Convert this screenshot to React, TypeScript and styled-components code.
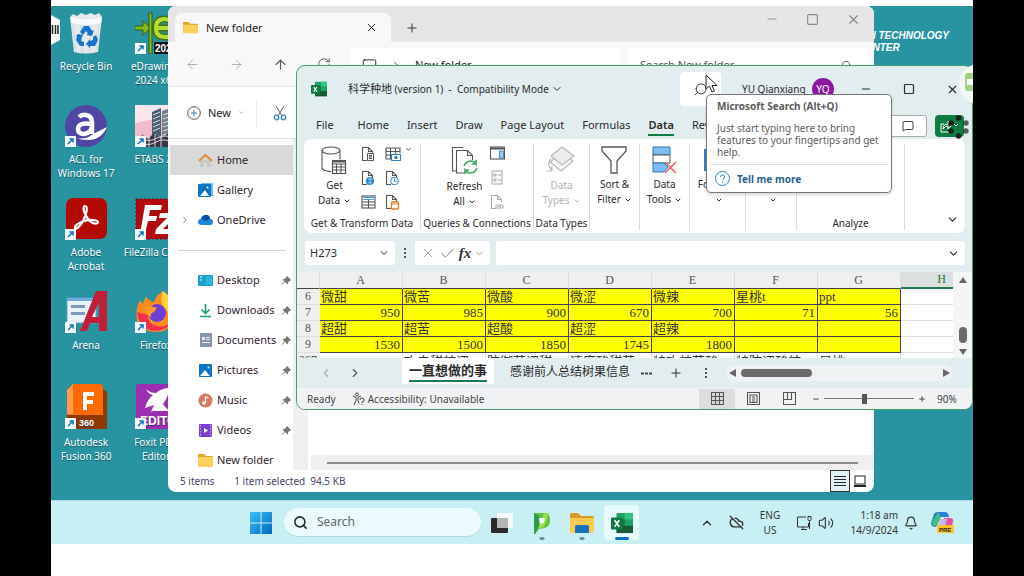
import React from 'react';
import styled, { createGlobalStyle } from 'styled-components';
import { ArrowLeft, ArrowRight, ArrowUp, Bell, ChevronDown, ChevronLeft, ChevronRight, ChevronUp, CloudOff, Minus, Monitor, Plus, RotateCw, Search, Square, Volume2, X, Check, MessageSquare } from 'lucide-react';

const ui = '"Noto Sans", "Noto Sans CJK SC", sans-serif';
const sheetFont = '"Liberation Serif", "Noto Sans CJK SC", serif';

const Global = createGlobalStyle`
  * { box-sizing: border-box; }
  body { margin: 0; background: #000; font-family: ${ui}; font-size: 10px; line-height: 14px; color: #2b2b2b; }
  button { border: 0; background: none; padding: 0; margin: 0; font: inherit; color: inherit; }
  input { border: 0; background: none; padding: 0; margin: 0; font: inherit; color: inherit; outline: 0; min-width: 0; }
  a { color: inherit; text-decoration: none; }
  svg { display: block; flex: none; }
`;

const Screen = styled.main`
  margin: 0 51px; min-height: 100vh; padding: 6px 0 32px; background: #fff;
  display: flex; flex-direction: column; overflow: hidden;
`;
const Desktop = styled.section`
  position: relative; flex: 1; min-height: 494px; background: #2894a2; overflow: hidden;
`;

/* Desktop shortcuts */
const Shortcuts = styled.div`
  display: grid; grid-template-columns: 70px 70px; grid-auto-rows: 93px; padding-top: 6px; color: #fff;
`;
const Shortcut = styled.button`
  display: flex; flex-direction: column; align-items: center; gap: 5px; white-space: pre-line; line-height: 14px;
  text-shadow: 0 1px 1px rgba(0, 40, 50, 0.6);
`;
const SideGadget = styled.svg`position: absolute; left: 0; top: 9px;`;
const WallText = styled.div`
  position: absolute; right: 24px; top: 24px; color: #fff; font: italic bold 10px/12px "Liberation Sans", sans-serif;
  text-align: left; white-space: nowrap;
  span { display: block; padding-left: 4px; }
`;

/* File manager window */
const Explorer = styled.section`
  position: absolute; left: 117px; right: 99px; top: 0; bottom: 8px; background: #fff; border-radius: 8px;
  display: flex; flex-direction: column; overflow: hidden; color: #222;
`;
const TabStrip = styled.div`
  height: 36px; background: #e7e5e6; display: flex; align-items: flex-end; padding: 0 13px 0 7px;
`;
const FolderTab = styled.div`
  width: 216px; height: 29px; background: #f8f8f8; border-radius: 7px 7px 0 0; display: flex; align-items: center;
  gap: 8px; padding: 0 13px 0 8px; font-size: 11px;
  span { flex: 1; }
`;
const StripButton = styled.button`
  height: 29px; width: 41px; display: grid; place-items: center;
`;
const StripWindowButtons = styled.div`
  margin-left: auto; display: flex; height: 36px; gap: 27px; align-items: center; color: #888; padding-bottom: 10px;
`;
const NavRow = styled.div`
  height: 45px; background: #f8f8f8; border-bottom: 1px solid #e5e5e5; display: flex; align-items: center;
  padding: 0 4px 0 17px; font-size: 11px;
`;
const NavIcons = styled.div`display: flex; width: 165px; gap: 29px; color: #555;`;
const AddressBox = styled.div`
  flex: 1; height: 32px; background: #fff; border-radius: 4px; display: flex; align-items: center; gap: 14px; padding: 2px 12px 0; margin-right: 8px;
`;
const FolderSearch = styled.label`
  width: 242px; height: 32px; background: #fff; border-radius: 4px; display: flex; align-items: center; padding: 2px 18px 0 12px; color: #555;
  input { flex: 1; }
  input::placeholder { color: #555; opacity: 1; }
`;
const CommandRow = styled.div`
  height: 52px; border-bottom: 1px solid #ddd; display: flex; align-items: center; padding-left: 19px;
`;
const NewButton = styled.button`
  display: flex; align-items: center; gap: 7px; width: 70px; height: 28px; border-right: 1px solid #eee; margin-right: 16px; font-size: 11px;
`;
const ExplorerBody = styled.div`flex: 1; min-height: 0; display: flex;`;
const Sidebar = styled.nav`
  width: 125px; padding: 6px 0 0 2px; overflow: hidden; font-size: 11px; color: #33232f;
`;
const Place = styled.a<{ $active?: boolean }>`
  height: 30px; display: flex; align-items: center; padding: 0 2px 0 10px; gap: 4px; white-space: nowrap;
  background: ${p => (p.$active ? '#d9d9d9' : 'transparent')};
  i { width: 14px; }
  span { flex: 1; }
`;
const Divider = styled.hr`margin: 15px 7px 14px 8px; border: 0; height: 1px; background: #d5d5d5;`;
const Gutter = styled.div`width: 15px; background: #efefef;`;
const FileArea = styled.div`flex: 1; display: flex; flex-direction: column; justify-content: flex-end; padding-left: 3px;`;
const HorizontalTrack = styled.div`
  height: 15px; background: #efefef; padding: 7px 16px 0 16px;
  &::before { content: ''; display: block; height: 2px; background: #8c8c8c; }
`;
const ExplorerStatus = styled.footer`
  height: 22px; display: flex; align-items: center; padding: 0 4px 0 12px; color: #444466;
`;
const StatusText = styled.span<{ $gap: number }>`margin-right: ${p => p.$gap}px;`;
const ViewGroup = styled.div`margin-left: auto; display: flex;`;
const ViewButton = styled.button<{ $on?: boolean }>`
  width: 20px; height: 22px; display: grid; place-items: center; border: ${p => (p.$on ? '1px solid #333' : '0')};
  background: ${p => (p.$on ? '#e0f1f5' : 'none')};
`;

/* Spreadsheet window */
const Excel = styled.section`
  position: absolute; left: 245px; right: 0; top: 59px; background: #e2edf0; border: 1px solid #45a06d;
  border-radius: 9px; overflow: hidden;
`;
const TitleBar = styled.header`
  height: 46px; display: flex; align-items: center; padding-left: 14px; font-size: 10px;
`;
const DocTitle = styled.button`
  display: flex; align-items: center; gap: 2px; margin-left: 21px; white-space: pre;
  b { font-size: 11px; font-weight: 400; }
`;
const SearchButton = styled.button`
  margin-left: auto; width: 41px; height: 34px; border-radius: 4px; background: #fff; display: grid; place-items: center;
  svg { transform: scaleX(-1); }
`;
const UserName = styled.span`margin-left: 21px; width: 70px; white-space: nowrap;`;
const Avatar = styled.span`
  width: 22px; height: 22px; border-radius: 50%; background: #8a1a9b; color: #fff; display: grid; place-items: center;
`;
const WindowButtons = styled.div`display: flex; gap: 31px; margin: 0 13px 0 26px;`;
const Tabs = styled.nav`
  height: 27px; display: flex; gap: 18px; padding: 0 8px 0 19px; font-size: 11px; white-space: nowrap;
`;
const RibbonTab = styled.button<{ $active?: boolean; $first?: boolean }>`
  height: 24px; padding-top: 3px; margin-right: ${p => (p.$first ? '6px' : '0')};
  font-weight: ${p => (p.$active ? 600 : 400)}; border-bottom: 2px solid ${p => (p.$active ? '#107c41' : 'transparent')};
`;
const TabActions = styled.div`margin-left: auto; display: flex; gap: 8px; padding-top: 3px;`;
const CommentButton = styled.button`
  width: 50px; height: 22px; border: 1px solid #aaa; border-radius: 3px; background: #fff; padding-left: 24px;
`;
const ShareButton = styled.button`
  width: 29px; height: 22px; border-radius: 4px; background: #107c41; color: #fff; display: flex; align-items: center; justify-content: center;
`;
const Ribbon = styled.div`
  margin: 0 7px; height: 94px; background: #fff; border-radius: 8px; display: flex; padding: 5px 0 3px;
`;
const Group = styled.section<{ $w: number }>`
  width: ${p => p.$w}px; border-right: 1px solid #dcdcdc; display: flex; flex-direction: column; align-items: center;
  white-space: nowrap;
  h3 { margin: 0; font: inherit; }
`;
const GroupTools = styled.div<{ $gap?: number; $indent?: number }>`
  display: flex; gap: ${p => p.$gap ?? 12}px; align-items: flex-start; height: 72px; padding: 2px 0 0 ${p => p.$indent ?? 0}px;
`;
const BigTool = styled.button<{ $muted?: boolean }>`
  display: flex; flex-direction: column; align-items: center; color: ${p => (p.$muted ? '#b5b5b5' : 'inherit')};
  svg { margin-bottom: 3px; }
  span { display: flex; align-items: center; height: 15px; line-height: 15px; }
  span svg { margin: 0 0 0 3px; }
`;
const SmallTools = styled.div<{ $cols: number }>`
  display: grid; grid-template-columns: repeat(${p => p.$cols}, 24px); grid-auto-rows: 24px;
`;
const SmallTool = styled.button`display: flex; align-items: flex-start; gap: 3px;`;
const Collapse = styled.button`margin: auto 6px 4px auto;`;
const FormulaRow = styled.div`display: flex; gap: 6px; padding: 8px 7px 7px 8px; height: 39px; align-items: stretch;`;
const WhiteBox = styled.div<{ $w?: number }>`
  background: #fff; border-radius: 3px; display: flex; align-items: center; justify-content: space-between; padding: 0 5px;
  ${p => (p.$w ? `width: ${p.$w}px;` : 'flex: 1;')}
  input { flex: 1; width: 20px; font-size: 11px; }
`;
const Fx = styled.em`font: italic bold 15px/18px "Liberation Serif", serif; color: #333;`;
const SheetArea = styled.div`height: 86px; display: flex; background: #efefef; overflow: hidden;`;
const SheetClip = styled.div`flex: 1; min-width: 0; overflow: hidden; background: #fff;`;
const Grid = styled.table`
  border-collapse: separate; border-spacing: 0; table-layout: fixed; width: 687px; font: 13px/15px ${sheetFont}; color: #333;
  th, td { height: 16px; padding: 0 2px 0 1px; overflow: hidden; white-space: nowrap; }
  th { font-weight: 400; font-size: 12px; background: #efeff0; border-bottom: 1px solid #ddd; color: #555; }
  thead th { height: 16px; border-right: 1px solid #ddd; border-bottom-color: #444; }
  tbody tr > :last-child { border-bottom: 1px solid #ddd; }
`;
const RowCol = styled.col`width: 23px;`;
const ColHead = styled.th<{ $picked?: boolean }>`
  && { ${p => p.$picked && 'background: #dcdfdf; color: #1f7a4d; border-bottom: 2px solid #1f7a4d;'} }
`;
const Cell = styled.td<{ $num?: boolean; $fill?: boolean }>`
  text-align: ${p => (p.$num ? 'right' : 'left')};
  ${p => (p.$fill ? 'background: #ffff00; border-right: 1px solid #444; border-bottom: 1px solid #444;' : 'border-right: 1px solid #ddd;')}
`;
const VerticalScroll = styled.div`
  width: 19px; display: flex; flex-direction: column; align-items: center; padding: 4px 0 2px; background: #f3f5f6;
`;
const VerticalThumb = styled.div`width: 8px; height: 16px; border-radius: 4px; background: #6b6b6b; margin: auto 0 5px;`;
const SheetTabs = styled.div`height: 30px; display: flex; align-items: center; padding: 0 19px 0 22px;`;
const SheetArrows = styled.div`display: flex; gap: 15px; width: 83px; color: #555;`;
const SheetTab = styled.button<{ $active?: boolean }>`
  height: 26px; padding: 0 7px; font-size: ${p => (p.$active ? 13 : 12)}px; white-space: nowrap;
  font-weight: ${p => (p.$active ? 700 : 400)}; background: ${p => (p.$active ? '#fff' : 'none')}; border-radius: 0 0 3px 3px;
  align-self: ${p => (p.$active ? 'flex-start' : 'center')}; margin-left: ${p => (p.$active ? 0 : 9)}px;
  span { display: block; line-height: 20px; border-bottom: 2px solid ${p => (p.$active ? '#1f7a4d' : 'transparent')}; }
`;
const SheetActions = styled.div`display: flex; align-items: center; gap: 17px; margin: 0 14px 0 4px;`;
const HScroll = styled.div`
  flex: 1; display: flex; align-items: center; background: #eff2f3; height: 16px; border-radius: 8px; padding: 0 3px;
`;
const HThumb = styled.div`width: 71px; height: 8px; border-radius: 4px; background: #6b6b6b; margin: 0 auto 0 4px;`;
const StatusBar = styled.footer`
  height: 21px; background: #f1f2f3; display: flex; align-items: center; padding: 0 11px 0 10px; color: #444;
`;
const Access = styled.button`display: flex; align-items: center; gap: 3px; margin: 0 auto 0 16px;`;
const ViewMode = styled.button<{ $on?: boolean }>`
  width: 36px; height: 20px; display: grid; place-items: center; background: ${p => (p.$on ? '#dddde0' : 'none')};
`;
const Zoom = styled.label`
  display: flex; align-items: center; gap: 4px; margin-left: 5px;
  input { appearance: none; width: 90px; height: 10px; background: linear-gradient(#777, #777) center / 100% 1px no-repeat; }
  input::-webkit-slider-thumb { appearance: none; width: 5px; height: 10px; background: #555; }
  output { width: 24px; margin-left: 7px; }
`;

const Tooltip = styled.aside`
  position: absolute; right: 81px; top: 88px; width: 186px; height: 99px; background: #fff; border: 1px solid #777; border-radius: 5px;
  padding: 3px 3px 0; color: #5c5c5c; line-height: 12px; box-shadow: 0 2px 3px rgba(0, 0, 0, 0.15);
  h2 { margin: 0 7px 8px; font-size: 10px; line-height: 16px; }
  p { margin: 0 7px; white-space: nowrap; }
  a { display: flex; align-items: center; gap: 7px; margin-top: 6px; border-top: 1px solid #e0e0e0; padding: 6px 5px 0; color: #2b6094; font-weight: 700; }
`;
const Pointer = styled.svg`position: absolute; right: 255px; top: 68px;`;
const Bubble = styled.svg`position: absolute; right: 0; top: 58px;`;
const Dots = styled.svg`position: absolute; right: 4px; top: 108px;`;

/* Taskbar */
const Taskbar = styled.footer`
  height: 44px; background: #c8eff3; border-top: 1px solid #a9dbe2; display: flex; align-items: center; padding: 0 13px 0 199px;
`;
const TaskSearch = styled.label`
  display: flex; align-items: center; gap: 9px; width: 197px; height: 29px; border-radius: 15px; background: #ebfafc;
  padding: 0 9px; margin: 0 12px; border-bottom: 1px solid #b5d8dd; font-size: 12px;
  input { flex: 1; }
  input::placeholder { color: #666; opacity: 1; }
`;
const TaskApps = styled.div`display: flex; gap: 5px; margin-left: -9px;`;
const TaskApp = styled.button<{ $open?: boolean; $active?: boolean }>`
  position: relative; width: 35px; height: 35px; border-radius: 4px; display: grid; place-items: center;
  background: ${p => (p.$active ? '#e7fafc' : 'none')};
  &::after {
    content: ''; position: absolute; bottom: 0; left: 50%; transform: translateX(-50%); height: 3px; border-radius: 2px;
    width: ${p => (p.$active ? 14 : p.$open ? 5 : 0)}px; background: ${p => (p.$active ? '#0a70c4' : '#6d8f95')};
  }
`;
const Tray = styled.div`
  margin-left: auto; display: flex; align-items: center; color: #333;
`;
const TrayButton = styled.button<{ $w: number; $right?: boolean }>`
  width: ${p => p.$w}px; display: flex; gap: 6px; justify-content: ${p => (p.$right ? 'flex-end' : 'center')};
  text-align: ${p => (p.$right ? 'right' : 'center')}; line-height: 15px; white-space: pre-line;
`;

/* Icons */
const Down = ({ s = 8 }: { s?: number }) => <ChevronDown size={s} strokeWidth={3} />;
const ShortcutArrow = () => (
  <g>
    <rect x="0" y="31" width="11" height="11" fill="#f5fbff" />
    <path d="M3 39l5-5M4.500 34H8v3.500" fill="none" stroke="#1672b5" strokeWidth="1.500" />
  </g>
);
const BinIcon = () => (
  <svg width="42" height="42" viewBox="0 0 42 42">
    <path d="M5 5l3-3 4 2 4-3 5 2 5-2 4 2 4-2 3 4-4 35q-12 3-24 0z" fill="#e4e9ec" />
    <path d="M5 5q16 5 32 0l-1 6q-15 3-30 0z" fill="#f8fafb" />
    <path d="M8 12l3 28M16 13l1 28M26 13l-1 28M34 12l-3 28" stroke="#cfd6da" />
    <g fill="#1773cc">
      <path d="M15 20l4-6h5l3 5 2-1-2 6-6-1 2-1-2-3-3 4z" />
      <path d="M13 22l5 1-1 2-1 4 3 1v4h-4l-4-6 1-3-1-1z" />
      <path d="M31 23l2 5-3 6h-5v2l-4-4 4-5v2l3-1 0-3z" />
    </g>
  </svg>
);
const EDrawIcon = () => (
  <svg width="42" height="42" viewBox="0 0 42 42">
    <path d="M0 14h8v-5l8 7-8 7v-5H0z" fill="#83b81d" stroke="#365c0b" />
    <path d="M14 1h3v41h-3z" fill="#86bd20" stroke="#33590a" />
    <path d="M22 16h15q0-9-7-9-9 0-9 9t9 9q5 0 7-2" fill="none" stroke="#44720d" strokeWidth="7" />
    <path d="M22 16h15q0-9-7-9-9 0-9 9t9 9q5 0 7-2" fill="none" stroke="#b4dc35" strokeWidth="4" />
    <rect x="19" y="30" width="23" height="12" fill="#111" />
    <text x="20" y="40" fontFamily="Liberation Sans, sans-serif" fontWeight="700" fontSize="10" fill="#fff">2024</text>
    <ShortcutArrow />
  </svg>
);
const AclIcon = () => (
  <svg width="42" height="42" viewBox="0 0 42 42">
    <circle cx="21" cy="21" r="21" fill="#5047a5" />
    <path d="M14 12q3-3 7-2 6 1 6 7v12M27 19q-14-2-14 5 0 5 6 5 8-1 8-9" fill="none" stroke="#fff" strokeWidth="4.500" />
    <path d="M11 33q10 2 17-4l14-7q-6 13-19 13-7 0-12-2z" fill="#fff" />
    <ShortcutArrow />
  </svg>
);
const EtabsIcon = () => (
  <svg width="42" height="42" viewBox="0 0 42 42">
    <rect width="42" height="42" fill="#f3bccb" />
    <path d="M0 0h42v9L0 18z" fill="#fae6ec" />
    <path d="M17 7l9-4v36h-9z" fill="#4d6074" />
    <path d="M27 6l11-4v38H27z" fill="#73808c" />
    <path d="M18 10l7-3m-7 7 7-3m-7 7 7-3m-7 7 7-3m-7 7 7-3M28 10l9-3m-9 7 9-3m-9 7 9-3m-9 7 9-3m-9 7 9-3m-9 7 9-3" stroke="#d8e0e8" />
    <path d="M4 42l3-13 6 5 6-6 6 7 8-7 9 8v6z" fill="#3c3444" />
    <path d="M6 33q8 5 16 0t20 2M5 37q8 5 16 0t21 2M8 29v13M14 31v11M20 29v13M26 31v11" stroke="#cfd3df" fill="none" />
    <ShortcutArrow />
  </svg>
);
const AcrobatIcon = () => (
  <svg width="42" height="42" viewBox="0 0 42 42">
    <rect x="1" width="41" height="41" rx="7" fill="#b30b00" />
    <path d="M20 8c-3 0-1 8 3 13 5 6 10 5 10 3s-8-3-14-1-10 5-9 7 6-2 9-9 4-13 1-13z" fill="none" stroke="#fff" strokeWidth="2.200" />
    <ShortcutArrow />
  </svg>
);
const FilezillaIcon = () => (
  <svg width="42" height="42" viewBox="0 0 42 42">
    <rect x="1" y="1" width="41" height="40" fill="#b20a0e" stroke="#7a0508" strokeDasharray="2 2" />
    <path d="M10 7h17l-1 5H15l-1 6h8l-1 5h-8l-3 13H5z" fill="#fff" />
    <path d="M25 15h15l-1 5-11 11h11l-1 5H20l1-5 11-11h-8z" fill="#fff" />
    <ShortcutArrow />
  </svg>
);
const ArenaIcon = () => (
  <svg width="42" height="42" viewBox="0 0 42 42">
    <rect x="2" y="7" width="29" height="25" fill="#e9f2fb" stroke="#6aa0d2" />
    <rect x="2" y="7" width="29" height="3" fill="#71abdf" />
    <path d="M6 14h14v3H6zM6 21h14v3H6z" fill="#8096c0" />
    <path d="M31 0h11v40h-8v-8h-9l-3 8h-7zM34 11l-7 15h7z" fill="#c11f38" fillRule="evenodd" />
    <ShortcutArrow />
  </svg>
);
const FirefoxIcon = () => (
  <svg width="42" height="42" viewBox="0 0 42 42">
    <path d="M28 0q9 7 12 14 4 9-1 17-6 10-18 10T3 32Q-1 21 5 9l3 4 3-8q2 5 8 6 2-7 9-11z" fill="#ff8a1c" />
    <path d="M28 0q9 7 12 14 3 9-2 18l-6 5q6-12-2-20-6-6-2-17z" fill="#ffd43a" />
    <path d="M2 21q2 18 19 19 11-1 16-9-9 7-18 3-7-3-6-10z" fill="#f0304f" />
    <circle cx="22" cy="22" r="9" fill="#6d3fd6" />
    <path d="M10 17q6-3 12 0l-3 4q-4 1-3 5-6-2-6-9z" fill="#ff9a22" />
    <ShortcutArrow />
  </svg>
);
const FusionIcon = () => (
  <svg width="42" height="46" viewBox="0 0 42 46">
    <path d="M2 5l6-5h26q4 0 4 5l4 3v37H7l-5-5z" fill="#8d3a05" />
    <path d="M8 0h27q3 0 3 4v27H2V6z" fill="#ff6b00" />
    <path d="M2 6l6-6v30H2z" fill="#ff9b50" />
    <path d="M18 8h11v4h-7v4h6v4h-6v6h-4z" fill="#fff" />
    <text x="14" y="42" fontFamily="Liberation Sans, sans-serif" fontWeight="700" fontSize="9" fill="#fff">360</text>
    <g transform="translate(0 3)"><ShortcutArrow /></g>
  </svg>
);
const FoxitIcon = () => (
  <svg width="42" height="46" viewBox="0 0 42 46">
    <rect x="1" width="41" height="45" rx="3" fill="#9c2fb0" />
    <path d="M11 5q4 4 10 4 6-5 13-5-1 17-18 24l3-7-9 3q2-8 8-13-5-1-7-6zM25 17l9 10H18z" fill="#fff" />
    <text x="5" y="41" fontFamily="Liberation Sans, sans-serif" fontWeight="700" fontSize="12" fill="#fff">EDITOR</text>
    <g transform="translate(0 3)"><ShortcutArrow /></g>
  </svg>
);
const FolderIcon = () => (
  <svg width="15" height="15" viewBox="0 0 16 16">
    <path d="M0 3q0-1 1-1h5l2 2h7q1 0 1 1v8H0z" fill="#e2a52b" />
    <path d="M0 5h16v8q0 1-1 1H1q-1 0-1-1z" fill="#fcd05c" />
  </svg>
);
const placeIcons: Record<string, React.ReactNode> = {
  Home: <><path d="M2 7h11v7H9v-4H6v4H2z" fill="#c9c9c9" /><path d="M1 8l6.500-6 6.500 6" stroke="#e08b3c" strokeWidth="2" fill="none" /></>,
  Gallery: <><rect x="3" y="0" width="12" height="13" rx="1" fill="#6cb8ec" /><rect x="0" y="1" width="13" height="13" rx="1" fill="#0d73c4" /><path d="M2 13l5-6 4 6z" fill="#fff" /><circle cx="9.500" cy="4.500" r="1" fill="#fff" /></>,
  OneDrive: <><path d="M4 12q-4 0-4-3t3-3q1-4 5-4t4 4q3 0 3 3t-3 3z" fill="#1f86d8" /><path d="M3 6q1-4 5-4t4 4l-4 2z" fill="#0b4fa3" /></>,
  Desktop: <><rect y="2" width="15" height="11" rx="1" fill="#1c9fcb" /><path d="M2 4h2M2 7h2" stroke="#dff" /><rect x="8" y="3" width="6" height="9" fill="#2cb6dc" /></>,
  Downloads: <path d="M7.500 1v9M3.500 6.500l4 4 4-4M2 13.500h11" stroke="#23a079" strokeWidth="1.700" fill="none" />,
  Documents: <><rect x="2" width="12" height="14" rx="1" fill="#8795a8" /><path d="M4 4h3v3H4zM8 4h4v1H8zM8 6h4v1H8zM4 9h8v1H4z" fill="#e9eef5" /></>,
  Pictures: <><rect x="1" y="1" width="13" height="13" rx="1" fill="#0d73c4" /><path d="M2 13l5-6 5 6z" fill="#fff" /><circle cx="10.500" cy="4.500" r="1" fill="#fff" /></>,
  Music: <><circle cx="7.500" cy="7.500" r="7" fill="#d47a66" /><path d="M7.500 10V4l3 1" stroke="#fff" strokeWidth="1.300" fill="none" /><circle cx="6" cy="10" r="1.700" fill="#fff" /></>,
  Videos: <><rect x="1" y="1" width="13" height="13" rx="1" fill="#7b3fd0" /><path d="M6 5l4 2.500L6 10z" fill="#fff" /><path d="M2.500 2v11M12.500 2v11" stroke="#c9a8f5" strokeDasharray="1.500 1.500" /></>,
  'New folder': <><path d="M0 2q0-1 1-1h5l2 2h6q1 0 1 1v8H0z" fill="#e2a52b" /><path d="M0 4h15v9q0 1-1 1H1q-1 0-1-1z" fill="#fcd05c" /></>,
};
const Pin = () => (
  <svg width="9" height="9" viewBox="0 0 9 9">
    <path d="M5 0l4 4-1 1-1 0-1 2 0 1-1 0-2-2-3 3 0-1 2.500-2.500L1 4l0-1 1 0 2-1 0-1z" fill="#777" />
  </svg>
);
const ExcelLogo = ({ s }: { s: number }) => (
  <svg width={s} height={s} viewBox="0 0 24 24">
    <rect x="6" y="1" width="18" height="22" rx="1" fill="#21a366" />
    <path d="M15 1h9v7h-9z" fill="#33c481" /><path d="M6 8h9v8H6z" fill="#107c41" /><path d="M6 15h18v8H6z" fill="#185c37" />
    <rect x="0" y="6" width="13" height="13" rx="1" fill="#0f7a3f" />
    <path d="M4 9l5 7M9 9l-5 7" stroke="#fff" strokeWidth="1.800" />
  </svg>
);
const line = { fill: 'none', stroke: '#555', strokeWidth: 1.1 };
const GetDataIcon = () => (
  <svg width="26" height="29" viewBox="0 0 26 29">
    <g {...line}>
      <path d="M1 4.500v18q3 3 9 3M19 4.500v9" /><ellipse cx="10" cy="4.500" rx="9" ry="3.500" />
      <rect x="11.500" y="14.500" width="13" height="13" fill="#fff" /><path d="M11.500 18h13M11.500 21h13M11.500 24h13M15.500 18v9M20 18v9" />
      <path d="M11.500 15.500h13" strokeWidth="2" />
    </g>
  </svg>
);
const Sheet = ({ children, muted }: { children?: React.ReactNode; muted?: boolean }) => (
  <svg width="15" height="16" viewBox="0 0 15 16">
    <path d="M6 14.500H1.500V1.500h6l4 4V8M7.500 1.500v4h4" fill="none" stroke={muted ? '#aaa' : '#555'} strokeWidth="1.100" />
    {children}
  </svg>
);
const TextFileIcon = () => <Sheet><path d="M6.500 7.500h6v7h-6zM8 9.500h3M8 11h3M8 12.500h3" fill="#fff" stroke="#555" /></Sheet>;
const WebFileIcon = () => <Sheet><circle cx="9" cy="11" r="4" fill="#2686d0" /><path d="M7 9.500q2-1 4 0M7 12.500q2 1 4 0M9 7v8" stroke="#bfe0f8" fill="none" strokeWidth=".7" /></Sheet>;
const RecentIcon = () => <Sheet><circle cx="9.500" cy="11" r="3.800" fill="#fff" stroke="#2f83c4" /><path d="M9.500 8.500v2.700h2" stroke="#2f83c4" fill="none" /></Sheet>;
const DbFileIcon = () => <Sheet><rect x="6.500" y="8" width="7" height="7" rx="1" fill="#fff" stroke="#e07b28" strokeWidth="1.300" /><path d="M6.500 10h7" stroke="#e07b28" /></Sheet>;
const LinkFileIcon = () => <Sheet muted><path d="M6 11h7v3H6zM8 12.500h3" fill="#fff" stroke="#aaa" /></Sheet>;
const TableIcon = () => (
  <svg width="15" height="16" viewBox="0 0 15 16"><g {...line}><rect x="1" y="2" width="13" height="12" /><path d="M1 8h13M1 11h13M7.500 5v9" /></g><path d="M2 3.500h11M2 5.500h11" stroke="#4c9bd6" /></svg>
);
const CameraTableIcon = () => (
  <svg width="17" height="16" viewBox="0 0 17 16"><g {...line}><path d="M6 13H1V2h14v5M1 5.500h14M1 9h5M5.500 2v11M10.500 2v5" /></g><rect x="6.500" y="8.500" width="9" height="6" fill="#fff" stroke="#2f83c4" /><circle cx="11" cy="11.500" r="1.700" fill="#2f83c4" /><path d="M9.500 8h3" stroke="#2f83c4" /></svg>
);
const RefreshIcon = () => (
  <svg width="28" height="30" viewBox="0 0 28 30">
    <g {...line}><path d="M5 25H1.500V1.500H12" /><path d="M13 27H5.500V4.500h11l5 5V14M16.500 4.500v5h5" /></g>
    <g fill="none" stroke="#3fa766" strokeWidth="1.600"><path d="M13 20q2-5 7-5 3 0 5 3v-4M25 18h-4M26 22q-2 5-7 5-3 0-5-3v4M14 24h4" /></g>
  </svg>
);
const PaneIcon = () => (
  <svg width="15" height="14" viewBox="0 0 15 14"><rect x=".5" y="1" width="14" height="12" {...line} /><path d="M.5 2.500h14" stroke="#555" strokeWidth="2" /><rect x="9.500" y="5" width="4" height="7" fill="#9ccbf0" stroke="#2f83c4" strokeWidth=".8" /></svg>
);
const PropsIcon = () => (
  <svg width="15" height="16" viewBox="0 0 15 16"><rect x="2" y="1" width="10" height="13" fill="#f5f5f5" stroke="#aaa" /><path d="M4 4h2v2H4zM4 9h2v2H4zM8 5h3M8 10h3" stroke="#aaa" fill="none" /></svg>
);
const DataTypesIcon = () => (
  <svg width="28" height="29" viewBox="0 0 28 29"><g fill="#ececec" stroke="#b8b8b8" strokeWidth="1.200"><path d="M3 16l11-9 12 8-12 10z" fill="#f7f7f7" /><path d="M4 10L15 1l12 9-12 9z" /><path d="M4 12q-5 7 1 12M5 25v-5M5 25H0" fill="none" /></g></svg>
);
const FunnelIcon = () => (
  <svg width="26" height="28" viewBox="0 0 26 28"><path d="M1 1h24v4l-9 10v12h-6V15L1 5z" {...line} strokeWidth={1.3} /></svg>
);
const DataToolsIcon = () => (
  <svg width="25" height="28" viewBox="0 0 25 28"><path d="M1 1h17v8H1z" fill="#7dbcf0" stroke="#2b76b8" /><path d="M1 9h17v8H1z" fill="#fff" stroke="#555" /><path d="M1 17h11l4 4-4 5H1z" fill="#7dbcf0" stroke="#2b76b8" /><path d="M13 16l11 11M24 16L13 27" stroke="#e05a5a" strokeWidth="1.400" /></svg>
);
const ForecastIcon = () => (
  <svg width="27" height="28" viewBox="0 0 27 28"><rect x="0" y="3" width="27" height="22" fill="#2f83c4" /><path d="M4 20l7-7 5 4 7-8" stroke="#fff" fill="none" strokeWidth="1.500" /></svg>
);
const OutlineIcon = () => (
  <svg width="27" height="28" viewBox="0 0 27 28"><g {...line}><rect x="8" y="3" width="16" height="20" /><path d="M8 8h16M8 13h16M8 18h16M3 5v16h4" /></g></svg>
);
const ShareIcon = () => (
  <svg width="20" height="14" viewBox="0 0 20 14" fill="none" stroke="#fff"><path d="M4 5H1v8h9v-3M3 10q0-5 5-5V2l4 4-4 4V7q-3 0-5 3zM14 5l2 2 2-2" /></svg>
);
const AccessIcon = () => (
  <svg width="13" height="14" viewBox="0 0 13 14" fill="none" stroke="#444"><circle cx="5" cy="2.500" r="1.500" /><path d="M1 4l3 1.500v3L2 13M9 4L6 5.500v3l1 3M8 8q0-2 2-2t2 2-2 2v1M10 12v1" /></svg>
);
const Tri = ({ d }: { d: string }) => <svg width="8" height="8" viewBox="0 0 8 8"><path d={d} fill="#666" /></svg>;

const places = ['Home', 'Gallery', 'OneDrive'];
const pinned = ['Desktop', 'Downloads', 'Documents', 'Pictures', 'Music', 'Videos', 'New folder'];
const shortcuts: [string, React.ReactNode][] = [
  ['Recycle Bin', <BinIcon />], ['eDrawings\n2024 x64', <EDrawIcon />],
  ['ACL for\nWindows 17', <AclIcon />], ['ETABS 20', <EtabsIcon />],
  ['Adobe\nAcrobat', <AcrobatIcon />], ['FileZilla Client', <FilezillaIcon />],
  ['Arena', <ArenaIcon />], ['Firefox', <FirefoxIcon />],
  ['Autodesk\nFusion 360', <FusionIcon />], ['Foxit PDF\nEditor', <FoxitIcon />],
];
const columns = ['A', 'B', 'C', 'D', 'E', 'F', 'G', 'H'];
const rows: [string, string[]][] = [
  ['6', ['微甜', '微苦', '微酸', '微涩', '微辣', '星桃t', 'ppt', '']],
  ['7', ['950', '985', '900', '670', '700', '71', '56', '']],
  ['8', ['超甜', '超苦', '超酸', '超涩', '超辣', '', '', '']],
  ['9', ['1530', '1500', '1850', '1745', '1800', '', '', '']],
  ['267', ['', '攻击甜辣涩', '防御苦涩甜', '速度酸甜苦', '特攻辣苦酸', '特防涩酸辣', '星桃', '']],
];

const PlaceLink = ({ name, pin }: { name: string; pin?: boolean }) => (
  <Place href="#" $active={name === 'Home'}>
    <i>{name === 'OneDrive' && <ChevronRight size={10} color="#666" />}</i>
    <svg width="15" height="15" viewBox="0 0 15 15">{placeIcons[name]}</svg>
    <span>{name}</span>
    {pin && <Pin />}
  </Place>
);

function ExplorerWindow() {
  return (
    <Explorer aria-label="New folder">
      <TabStrip>
        <FolderTab><FolderIcon /><span>New folder</span><X size={13} strokeWidth={1.8} /></FolderTab>
        <StripButton aria-label="New tab"><Plus size={14} strokeWidth={1.5} /></StripButton>
        <StripWindowButtons>
          <button aria-label="Minimize"><Minus size={14} strokeWidth={1.5} /></button>
          <button aria-label="Maximize"><Square size={13} strokeWidth={2} /></button>
          <button aria-label="Close"><X size={15} strokeWidth={1.8} /></button>
        </StripWindowButtons>
      </TabStrip>
      <NavRow>
        <NavIcons>
          <ArrowLeft size={15} strokeWidth={1.5} color="#aaa" /><ArrowRight size={15} strokeWidth={1.5} color="#aaa" />
          <ArrowUp size={15} strokeWidth={1.8} /><RotateCw size={14} strokeWidth={1.5} />
        </NavIcons>
        <AddressBox><Monitor size={15} strokeWidth={1.5} /><ChevronRight size={10} /><span>New folder</span></AddressBox>
        <FolderSearch><input placeholder="Search New folder" aria-label="Search New folder" /><Search size={11} /></FolderSearch>
      </NavRow>
      <CommandRow>
        <NewButton>
          <svg width="14" height="14" viewBox="0 0 14 14" fill="none"><circle cx="7" cy="7" r="6.300" stroke="#555" /><path d="M7 4v6M4 7h6" stroke="#2f83c4" /></svg>
          New <ChevronDown size={7} color="#888" />
        </NewButton>
        <button aria-label="Cut">
          <svg width="14" height="16" viewBox="0 0 14 16" fill="none"><path d="M3 1l6 10M11 1L5 11" stroke="#666" /><circle cx="3.500" cy="12.500" r="2.300" stroke="#2f83c4" strokeWidth="1.200" /><circle cx="10.500" cy="12.500" r="2.300" stroke="#2f83c4" strokeWidth="1.200" /></svg>
        </button>
      </CommandRow>
      <ExplorerBody>
        <Sidebar>
          {places.map(p => <PlaceLink key={p} name={p} />)}
          <Divider />
          {pinned.map(p => <PlaceLink key={p} name={p} pin={p !== 'New folder'} />)}
        </Sidebar>
        <Gutter />
        <FileArea><HorizontalTrack /></FileArea>
      </ExplorerBody>
      <ExplorerStatus>
        <StatusText $gap={20}>5 items</StatusText>
        <StatusText $gap={5}>1 item selected</StatusText>
        <StatusText $gap={0}>94.5 KB</StatusText>
        <ViewGroup>
          <ViewButton $on aria-label="Details"><svg width="12" height="12" viewBox="0 0 12 12"><path d="M0 1.500h12M0 4.500h12M0 7.500h12M0 10.500h12" stroke="#222" /></svg></ViewButton>
          <ViewButton aria-label="Large icons"><svg width="12" height="12" viewBox="0 0 12 12"><rect x="1" y="1" width="10" height="8" fill="none" stroke="#222" /><path d="M0 11h12" stroke="#222" strokeWidth="2" /></svg></ViewButton>
        </ViewGroup>
      </ExplorerStatus>
    </Explorer>
  );
}

function ExcelWindow() {
  return (
    <Excel aria-label="Workbook">
      <TitleBar>
        <ExcelLogo s={16} />
        <DocTitle><span><b>科学种地</b>{' (version 1)  -  Compatibility Mode'}</span><ChevronDown size={12} strokeWidth={2} /></DocTitle>
        <SearchButton aria-label="Search"><Search size={15} strokeWidth={1.5} /></SearchButton>
        <UserName>YU Qianxiang</UserName>
        <Avatar>YQ</Avatar>
        <WindowButtons>
          <button aria-label="Minimize"><Minus size={12} strokeWidth={2} /></button>
          <button aria-label="Maximize"><Square size={12} strokeWidth={2.4} /></button>
          <button aria-label="Close"><X size={13} strokeWidth={2} /></button>
        </WindowButtons>
      </TitleBar>
      <Tabs>
        {['File', 'Home', 'Insert', 'Draw', 'Page Layout', 'Formulas', 'Data', 'Review'].map(t => (
          <RibbonTab key={t} $active={t === 'Data'} $first={t === 'File'}>{t}</RibbonTab>
        ))}
        <TabActions>
          <CommentButton aria-label="Comments"><MessageSquare size={12} strokeWidth={1.8} /></CommentButton>
          <ShareButton aria-label="Share"><ShareIcon /></ShareButton>
        </TabActions>
      </Tabs>
      <Ribbon>
        <Group $w={117}>
          <GroupTools $gap={10} $indent={3}>
            <BigTool><GetDataIcon /><span>Get</span><span>Data <Down /></span></BigTool>
            <SmallTools $cols={2}>
              <SmallTool aria-label="From text"><TextFileIcon /></SmallTool>
              <SmallTool aria-label="From picture"><CameraTableIcon /><Down s={7} /></SmallTool>
              <SmallTool aria-label="From web"><WebFileIcon /></SmallTool>
              <SmallTool aria-label="Recent sources"><RecentIcon /></SmallTool>
              <SmallTool aria-label="From table"><TableIcon /></SmallTool>
              <SmallTool aria-label="Existing connections"><DbFileIcon /></SmallTool>
            </SmallTools>
          </GroupTools>
          <h3>Get &amp; Transform Data</h3>
        </Group>
        <Group $w={113}>
          <GroupTools $gap={8} $indent={7}>
            <BigTool><RefreshIcon /><span>Refresh</span><span>All <Down /></span></BigTool>
            <SmallTools $cols={1}>
              <SmallTool aria-label="Queries pane"><PaneIcon /></SmallTool>
              <SmallTool aria-label="Properties"><PropsIcon /></SmallTool>
              <SmallTool aria-label="Edit links"><LinkFileIcon /></SmallTool>
            </SmallTools>
          </GroupTools>
          <h3>Queries &amp; Connections</h3>
        </Group>
        <Group $w={56}>
          <GroupTools><BigTool $muted><DataTypesIcon /><span>Data</span><span>Types <Down /></span></BigTool></GroupTools>
          <h3>Data Types</h3>
        </Group>
        <Group $w={50}><GroupTools><BigTool><FunnelIcon /><span>Sort &amp;</span><span>Filter <Down /></span></BigTool></GroupTools></Group>
        <Group $w={50}><GroupTools><BigTool><DataToolsIcon /><span>Data</span><span>Tools <Down /></span></BigTool></GroupTools></Group>
        <Group $w={56}><GroupTools><BigTool><ForecastIcon /><span>Forecast</span><span><Down /></span></BigTool></GroupTools></Group>
        <Group $w={51}><GroupTools><BigTool aria-label="Outline"><OutlineIcon /><span /><span><Down /></span></BigTool></GroupTools></Group>
        <Group $w={108}><GroupTools /><h3>Analyze</h3></Group>
        <Collapse aria-label="Collapse ribbon"><ChevronDown size={13} strokeWidth={2.2} /></Collapse>
      </Ribbon>
      <FormulaRow>
        <WhiteBox $w={90}><input defaultValue="H273" aria-label="Name box" /><ChevronDown size={12} /></WhiteBox>
        <svg width="8" height="24" viewBox="0 0 8 24"><path d="M4 7v2M4 11v2M4 15v2" stroke="#555" strokeWidth="2" /></svg>
        <WhiteBox $w={75}>
          <X size={16} strokeWidth={1.5} color="#aaa" /><Check size={17} strokeWidth={1.5} color="#aaa" />
          <Fx>fx</Fx><ChevronDown size={11} color="#999" />
        </WhiteBox>
        <WhiteBox><input aria-label="Formula" /><ChevronDown size={13} /></WhiteBox>
      </FormulaRow>
      <SheetArea>
        <SheetClip>
          <Grid>
            <colgroup><RowCol />{columns.map(c => <col key={c} />)}</colgroup>
            <thead>
              <tr><th aria-label="Select all" />{columns.map(c => <ColHead key={c} $picked={c === 'H'}>{c}</ColHead>)}</tr>
            </thead>
            <tbody>
              {rows.map(([n, cells]) => (
                <tr key={n}>
                  <th>{n}</th>
                  {cells.map((v, i) => <Cell key={i} $num={/^\d+$/.test(v)} $fill={n !== '267' && i < 7}>{v}</Cell>)}
                </tr>
              ))}
            </tbody>
          </Grid>
        </SheetClip>
        <VerticalScroll>
          <Tri d="M4 1l4 6H0z" /><VerticalThumb /><Tri d="M4 7l4-6H0z" />
        </VerticalScroll>
      </SheetArea>
      <SheetTabs>
        <SheetArrows><ChevronLeft size={14} color="#aaa" /><ChevronRight size={14} /></SheetArrows>
        <SheetTab $active><span>一直想做的事</span></SheetTab>
        <SheetTab><span>感谢前人总结树果信息</span></SheetTab>
        <SheetActions>
          <svg width="11" height="3" viewBox="0 0 11 3"><path d="M0 1.500h3M4 1.500h3M8 1.500h3" stroke="#444" strokeWidth="2" /></svg>
          <Plus size={14} strokeWidth={1.7} />
          <svg width="12" height="14" viewBox="0 0 12 14"><path d="M6 2v2M6 6v2M6 10v2" stroke="#555" strokeWidth="2" /></svg>
        </SheetActions>
        <HScroll><Tri d="M7 0v8L0 4z" /><HThumb /><Tri d="M1 0v8l7-4z" /></HScroll>
      </SheetTabs>
      <StatusBar>
        <span>Ready</span>
        <Access><AccessIcon />Accessibility: Unavailable</Access>
        <ViewMode $on aria-label="Normal"><svg width="13" height="13" viewBox="0 0 13 13"><path d="M.5.5h12v12H.5zM.5 4.500h12M.5 8.500h12M4.500.5v12M8.500.5v12" {...line} /></svg></ViewMode>
        <ViewMode aria-label="Page layout"><svg width="13" height="13" viewBox="0 0 13 13"><path d="M.5.5h12v12H.5zM3 3h7v7.500H3zM5 5h3M5 7h3M5 9h3" {...line} /></svg></ViewMode>
        <ViewMode aria-label="Page break"><svg width="13" height="13" viewBox="0 0 13 13"><path d="M.5.5h12v12H.5zM4.500.5v7M.5 7.500h8V.5" {...line} /></svg></ViewMode>
        <Zoom><Minus size={8} strokeWidth={3} /><input type="range" defaultValue="45" aria-label="Zoom" /><Plus size={8} strokeWidth={3} /><output>90%</output></Zoom>
      </StatusBar>
    </Excel>
  );
}

export default function App() {
  return (
    <>
      <Global />
      <Screen>
        <Desktop>
          <Shortcuts>
            {shortcuts.map(([name, icon]) => <Shortcut key={name}>{icon}{name}</Shortcut>)}
          </Shortcuts>
          <SideGadget width="9" height="30" viewBox="0 0 9 30"><path d="M0 0l9 5v20l-9 5z" fill="#fff" /><path d="M1.500 10v9M4.500 10v9M7 10v9" stroke="#222" strokeWidth="1.500" /></SideGadget>
          <WallText>N TECHNOLOGY<span>NTER</span></WallText>
          <ExplorerWindow />
          <ExcelWindow />
          <Tooltip role="tooltip">
            <h2>Microsoft Search (Alt+Q)</h2>
            <p>Just start typing here to bring<br />features to your fingertips and get<br />help.</p>
            <a href="#">
              <svg width="15" height="15" viewBox="0 0 15 15" fill="none" stroke="#2f83c4"><circle cx="7.500" cy="7.500" r="7" /><path d="M5.500 6q0-2 2-2t2 2-2 2.500M7.500 10v1.500" /></svg>
              Tell me more
            </a>
          </Tooltip>
          <Pointer width="13" height="19" viewBox="0 0 13 19"><path d="M1 1v14l3.500-3 2.500 6 2.500-1-2.500-5.500h5z" fill="#fff" stroke="#222" /></Pointer>
          <Dots width="21" height="26" viewBox="0 0 21 26" fill="#1a1f1c">
            <circle cx="10.500" cy="4" r="2.700" /><circle cx="3" cy="9" r="2.700" /><circle cx="3" cy="17" r="2.700" /><circle cx="10.500" cy="22" r="2.700" />
            <circle cx="18" cy="9" r="2.700" opacity=".7" /><circle cx="18" cy="17" r="2.700" opacity=".7" />
          </Dots>
          <Bubble width="14" height="40" viewBox="0 0 14 40"><circle cx="20" cy="20" r="20" fill="#f3f8f5" /><rect x="6" y="9" width="10" height="18" rx="3" fill="#a6cf86" /><path d="M8 15h6v6H8z" fill="#fff" /></Bubble>
        </Desktop>
        <Taskbar>
          <button aria-label="Start"><svg width="22" height="22" viewBox="0 0 22 22"><defs><linearGradient id="win" x1="0" y1="0" x2="1" y2="1"><stop offset="0" stopColor="#3cc0f4" /><stop offset="1" stopColor="#0067c0" /></linearGradient></defs><path d="M0 0h10.500v10.500H0zM11.500 0H22v10.500H11.500zM0 11.500h10.500V22H0zM11.500 11.500H22V22H11.500z" fill="url(#win)" /></svg></button>
          <TaskSearch><Search size={15} strokeWidth={2.5} /><input placeholder="Search" aria-label="Search" /></TaskSearch>
          <TaskApps>
            <TaskApp aria-label="Task view"><svg width="22" height="22" viewBox="0 0 22 22"><rect x="6" y="1" width="16" height="15" rx="1" fill="#f5f9fa" /><rect x="0" y="6" width="17" height="15" rx="1" fill="#2b2b2b" /><path d="M6 6h11v10H6z" fill="#b5b5b5" /></svg></TaskApp>
            <TaskApp $open aria-label="PaperCut"><svg width="18" height="22" viewBox="0 0 18 22"><path d="M1 1h12q4 1 4 7t-5 8l-6 1-4 5z" fill="#62c33c" /><path d="M1 1l5 3v11l-4 7H1z" fill="#2f9a4a" /><path d="M11 1l5 0-5 14-6 2z" fill="#9bdc4c" /><path d="M6 6l6 0-1 5-4 1z" fill="#eafbff" /></svg></TaskApp>
            <TaskApp $open aria-label="File Explorer"><svg width="24" height="22" viewBox="0 0 24 22"><path d="M0 3q0-2 2-2h6l3 3h11q2 0 2 2v13H0z" fill="#dc9a22" /><path d="M0 6h24v13q0 2-2 2H2q-2 0-2-2z" fill="#fccb4f" /><path d="M5 15q0-2 2-2h10q2 0 2 2v6H5z" fill="#1670bd" /></svg></TaskApp>
            <TaskApp $active aria-label="Excel"><ExcelLogo s={22} /></TaskApp>
          </TaskApps>
          <Tray>
            <TrayButton $w={26} aria-label="Hidden icons"><ChevronUp size={14} strokeWidth={2.2} /></TrayButton>
            <TrayButton $w={32} aria-label="Cloud"><CloudOff size={15} strokeWidth={2.2} /></TrayButton>
            <TrayButton $w={36}>{'ENG\nUS'}</TrayButton>
            <TrayButton $w={54} aria-label="Network and volume">
              <svg width="16" height="16" viewBox="0 0 16 16" fill="none" stroke="#333"><path d="M10 2H1.500v10h11V8M5 14.500h6M7 12v2.500M12 1.500h3v3l-1 1.500h-1l-1-1.500zM13.500 6v8" /></svg>
              <Volume2 size={16} strokeWidth={1.6} />
            </TrayButton>
            <TrayButton $w={56} $right>{'1:18 am\n14/9/2024'}</TrayButton>
            <TrayButton $w={26} aria-label="Notifications"><Bell size={14} strokeWidth={2} /></TrayButton>
            <TrayButton $w={36} aria-label="Copilot">
              <svg width="23" height="23" viewBox="0 0 23 23"><path d="M3 3q1-2 4-2h7q3 0 4 5l-8 0q-2 0-3 5l-2 5q-5 0-5-4z" fill="#2b7de0" /><path d="M3 8l4-7 3 5-4 9q-5 0-5-3z" fill="#44c07a" /><path d="M13 7h6q4 0 3 4l-2 7q-1 3-4 3H9q3 0 4-5z" fill="#e0559c" /><path d="M9 8h7l-2 7H8z" fill="#c7b6f5" /><rect x="6" y="14" width="17" height="8" fill="#ffc32b" /><text x="8" y="21" fontFamily="Liberation Sans, sans-serif" fontWeight="700" fontSize="6" fill="#222">PRE</text></svg>
            </TrayButton>
          </Tray>
        </Taskbar>
      </Screen>
    </>
  );
}
